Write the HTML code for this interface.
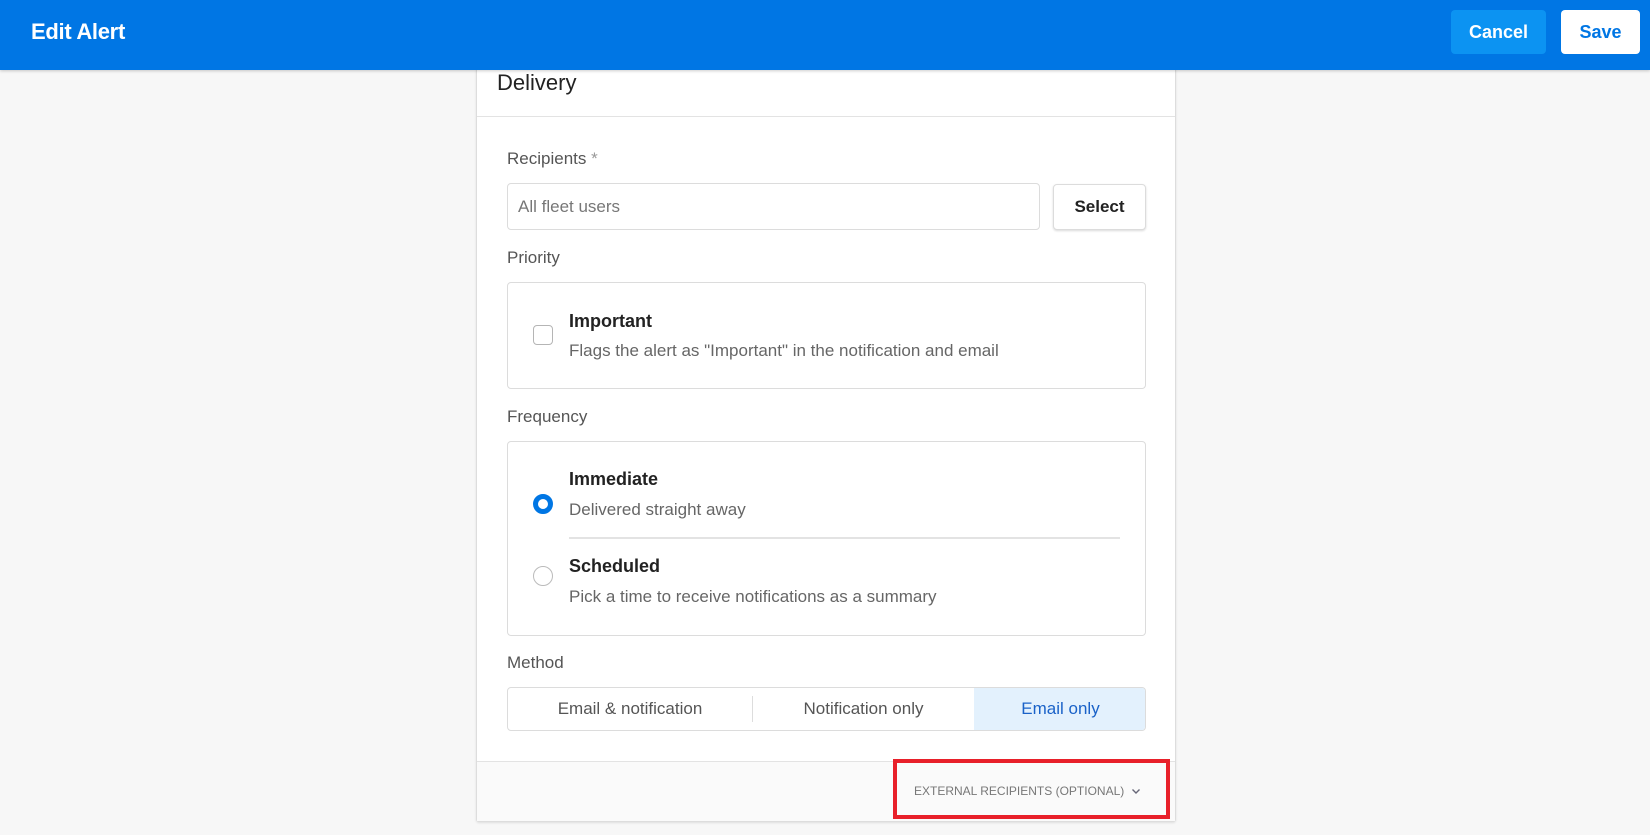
<!DOCTYPE html>
<html><head><meta charset="utf-8"><style>
*{box-sizing:border-box;margin:0;padding:0}
body{width:1650px;height:835px;overflow:hidden;background:#f7f7f7;font-family:"Liberation Sans",Arial,sans-serif;position:relative;color:#222}
.hdr{position:absolute;left:0;top:0;width:1650px;height:70px;background:#0076e4;z-index:5;box-shadow:0 1px 3px rgba(0,0,0,.2)}
.hdr h1{position:absolute;left:31px;top:19px;font-size:22px;color:#fff;font-weight:bold;letter-spacing:-0.3px}
.btn{position:absolute;top:10px;height:44px;border-radius:4px;font-size:18px;font-weight:bold;display:flex;align-items:center;justify-content:center}
.cancel{left:1451px;width:95px;background:#0c93f2;color:#fff}
.save{left:1561px;width:79px;background:#fff;color:#0076e4}
.card{position:absolute;left:476px;top:40px;width:700px;height:782px;background:#fff;border:1px solid #ddd;border-radius:3px;box-shadow:0 1px 2px rgba(0,0,0,.1)}
.abs{position:absolute}
.lbl{font-size:17px;color:#555}
.box{border:1px solid #dcdcdc;border-radius:4px;background:#fff}
.t{font-size:18px;font-weight:bold;color:#222}
.d{font-size:17px;color:#666}
</style></head><body>
<div class="hdr"><h1>Edit Alert</h1>
<div class="btn cancel">Cancel</div><div class="btn save">Save</div></div>

<div class="card">
<div class="abs" style="left:20px;top:29px;font-size:22px;color:#222">Delivery</div>
<div class="abs" style="left:0;top:75px;width:698px;height:1px;background:#e3e3e3"></div>

<div class="abs lbl" style="left:30px;top:108px">Recipients <span style="color:#999">*</span></div>
<div class="abs box" style="left:30px;top:142px;width:533px;height:47px"><span class="abs d" style="left:10px;top:13px;color:#777">All fleet users</span></div>
<div class="abs box" style="left:576px;top:143px;width:93px;height:46px;box-shadow:0 1px 2px rgba(0,0,0,.15);display:flex;align-items:center;justify-content:center;font-size:17px;font-weight:bold;color:#222">Select</div>

<div class="abs lbl" style="left:30px;top:207px">Priority</div>
<div class="abs box" style="left:30px;top:241px;width:639px;height:107px">
<div class="abs" style="left:25px;top:42px;width:20px;height:20px;border:1px solid #b5b5b5;border-radius:4px"></div>
<div class="abs t" style="left:61px;top:28px">Important</div>
<div class="abs d" style="left:61px;top:58px">Flags the alert as "Important" in the notification and email</div>
</div>

<div class="abs lbl" style="left:30px;top:366px">Frequency</div>
<div class="abs box" style="left:30px;top:400px;width:639px;height:195px">
<div class="abs" style="left:25px;top:52px;width:20px;height:20px;border:5px solid #0076e4;border-radius:50%"></div>
<div class="abs t" style="left:61px;top:27px">Immediate</div>
<div class="abs d" style="left:61px;top:58px">Delivered straight away</div>
<div class="abs" style="left:61px;top:95px;width:551px;height:2px;background:#e3e3e3"></div>
<div class="abs" style="left:25px;top:124px;width:20px;height:20px;border:1px solid #bbb;border-radius:50%"></div>
<div class="abs t" style="left:61px;top:114px">Scheduled</div>
<div class="abs d" style="left:61px;top:145px">Pick a time to receive notifications as a summary</div>
</div>

<div class="abs lbl" style="left:30px;top:612px">Method</div>
<div class="abs box" style="left:30px;top:646px;width:639px;height:44px;overflow:hidden;font-size:17px;color:#555">
<div class="abs" style="left:0;top:0;width:244px;height:42px;display:flex;align-items:center;justify-content:center">Email &amp; notification</div>
<div class="abs" style="left:244px;top:8px;width:1px;height:26px;background:#ddd"></div>
<div class="abs" style="left:245px;top:0;width:221px;height:42px;display:flex;align-items:center;justify-content:center">Notification only</div>
<div class="abs" style="left:466px;top:0;width:173px;height:42px;background:#e3f1fd;color:#1a62c8;display:flex;align-items:center;justify-content:center">Email only</div>
</div>

<div class="abs" style="left:0;top:720px;width:698px;height:60px;background:#fafafa;border-top:1px solid #e3e3e3"></div>
<div class="abs" style="left:416px;top:718px;width:277px;height:60px;border:4px solid #e8202a"></div>
<div class="abs" style="left:437px;top:743px;font-size:12px;color:#777;letter-spacing:0">EXTERNAL RECIPIENTS (OPTIONAL) <svg width="10" height="8" viewBox="0 0 10 8" style="margin-left:3px"><path d="M1.5 2.5 L5 6 L8.5 2.5" fill="none" stroke="#667" stroke-width="1.4"/></svg></div>
</div>
</body></html>
